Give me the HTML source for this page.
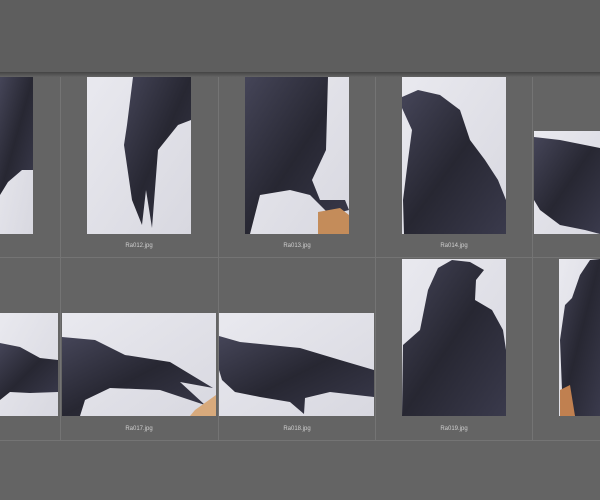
<!DOCTYPE html>
<html><head><style>
html,body{margin:0;padding:0;width:600px;height:500px;overflow:hidden;background:#646464}
svg{display:block}
text{font-family:"Liberation Sans",sans-serif;font-size:6px;fill:#d0d0d0}
</style></head><body>
<svg width="600" height="500" viewBox="0 0 600 500">
<defs>
<linearGradient id="bg" x1="0" y1="0" x2="1" y2="1"><stop offset="0" stop-color="#e9e9ef"/><stop offset="1" stop-color="#d8d8e0"/></linearGradient>
<linearGradient id="bird" x1="0" y1="0" x2="1" y2="1"><stop offset="0" stop-color="#454558"/><stop offset=".5" stop-color="#272732"/><stop offset="1" stop-color="#3a3a4c"/></linearGradient>
<linearGradient id="shad" x1="0" y1="0" x2="0" y2="1"><stop offset="0" stop-color="#444"/><stop offset="1" stop-color="#646464"/></linearGradient>
</defs>
<rect x="0" y="0" width="600" height="72" fill="#5e5e5e"/>
<rect x="0" y="72" width="600" height="5" fill="url(#shad)"/>
<g stroke="#747474" stroke-width="1">
<line x1="60.5" y1="77" x2="60.5" y2="440"/>
<line x1="218.5" y1="77" x2="218.5" y2="440"/>
<line x1="375.5" y1="77" x2="375.5" y2="440"/>
<line x1="532.5" y1="77" x2="532.5" y2="440"/>
<line x1="0" y1="257.5" x2="600" y2="257.5"/>
<line x1="0" y1="440.5" x2="600" y2="440.5"/>
</g>
<rect x="0" y="77" width="33" height="157" fill="url(#bg)"/>
<path d="M0 77H33V170L22 170 8 182 0 195Z" fill="url(#bird)"/>
<rect x="87" y="77" width="104" height="157" fill="url(#bg)"/>
<path d="M133 77H191V120L178 125 158 150 152 228 146 190 142 225 132 200 124 145 127 125Z" fill="url(#bird)"/>
<rect x="245" y="77" width="104" height="157" fill="url(#bg)"/>
<path d="M245 77H328L326 150 312 180 320 200 345 200 349 210 330 215 310 195 290 190 260 195 250 234 245 234Z" fill="url(#bird)"/>
<path d="M318 212L340 208 349 215 349 234 318 234Z" fill="#c48c5a"/>
<rect x="402" y="77" width="104" height="157" fill="url(#bg)"/>
<path d="M402 97L418 90 440 95 460 110 470 140 485 160 498 180 506 200 506 234 404 234 403 200 408 160 412 130 402 108Z" fill="url(#bird)"/>
<rect x="534" y="131" width="66" height="103" fill="url(#bg)"/>
<path d="M534 137L560 140 600 148 600 234 585 230 560 225 540 210 534 200Z" fill="url(#bird)"/>
<rect x="0" y="313" width="58" height="103" fill="url(#bg)"/>
<path d="M0 343L20 347 40 358 58 360 58 392 30 393 10 392 0 400Z" fill="url(#bird)"/>
<rect x="62" y="313" width="154" height="103" fill="url(#bg)"/>
<path d="M62 337L95 340 125 355 170 362 213 388 180 382 205 405 160 390 110 388 85 400 80 416 62 416Z" fill="url(#bird)"/>
<path d="M195 410L216 395 216 416 190 416Z" fill="#d8aa7c"/>
<rect x="219" y="313" width="155" height="103" fill="url(#bg)"/>
<path d="M219 336L240 342 300 348 340 360 374 370 374 397 330 392 305 398 304 414 290 402 260 397 235 392 222 380 219 370Z" fill="url(#bird)"/>
<rect x="402" y="259" width="104" height="157" fill="url(#bg)"/>
<path d="M420 330L428 290 438 268 452 260 470 262 484 270 476 280 475 300 492 310 503 330 506 350 506 416 402 416 403 345Z" fill="url(#bird)"/>
<rect x="559" y="259" width="41" height="157" fill="url(#bg)"/>
<path d="M572 298L580 275 590 260 600 259 600 416 575 416 562 390 560 340 565 305Z" fill="url(#bird)"/>
<path d="M560 390L570 385 575 416 560 416Z" fill="#c08050"/>
<text x="139" y="247" text-anchor="middle">Ra012.jpg</text>
<text x="297" y="247" text-anchor="middle">Ra013.jpg</text>
<text x="454" y="247" text-anchor="middle">Ra014.jpg</text>
<text x="139" y="430" text-anchor="middle">Ra017.jpg</text>
<text x="297" y="430" text-anchor="middle">Ra018.jpg</text>
<text x="454" y="430" text-anchor="middle">Ra019.jpg</text>
</svg>
</body></html>
